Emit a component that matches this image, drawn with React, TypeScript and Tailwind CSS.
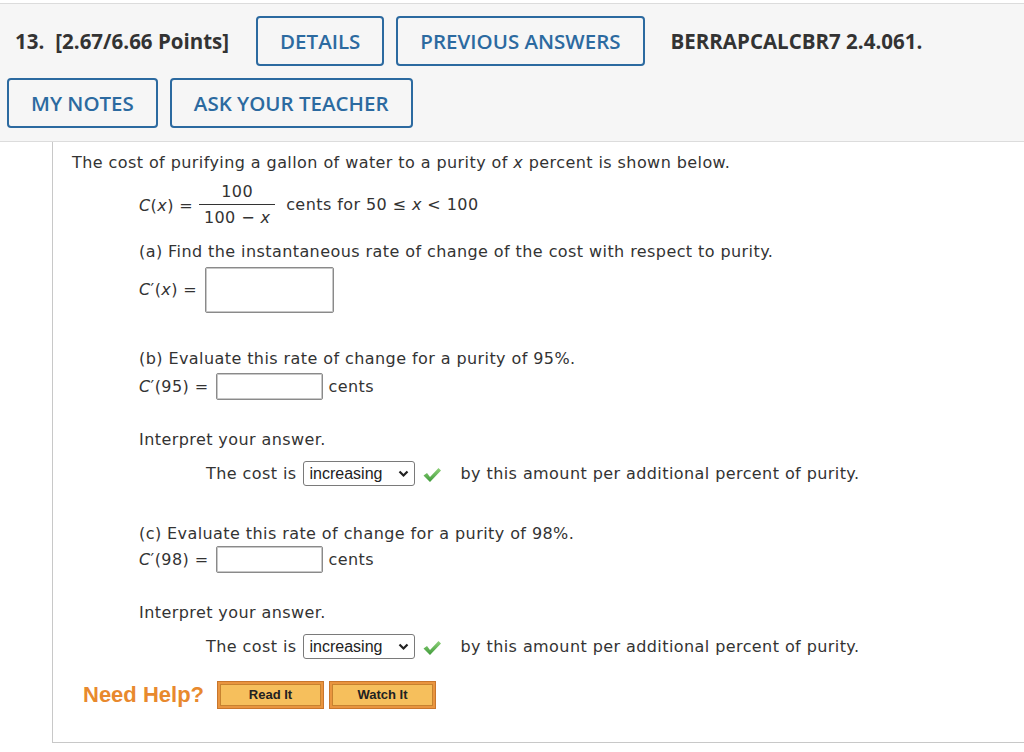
import React from 'react';

// Header button (blue outline)
function OutlineButton({ label }: { label: string }) {
  return (
    <div className="h-[50px] flex items-center px-[22px] border-2 border-[#2c6aa0] rounded-[4px] text-[#2c6aa0] text-[20.5px] font-semibold bg-[#f6f6f6]">
      {label}
    </div>
  );
}

function AnswerBox({ w, h }: { w: string; h: string }) {
  return <div className={`${w} ${h} border border-[#8a8a8a] rounded-[2px] bg-white shadow-[inset_0_0_0_1px_#c8c8c8]`} />;
}

function CheckMark() {
  return (
    <svg width="20" height="18" viewBox="0 0 20 18">
      <defs>
        <linearGradient id="chk" x1="0" y1="0" x2="0" y2="1">
          <stop offset="0" stopColor="#8fd27a" />
          <stop offset="1" stopColor="#3f9a3a" />
        </linearGradient>
      </defs>
      <path d="M1.5 9.5 L5 7 L8 11 L16.5 2 L19 4.5 L8 16 Z" fill="url(#chk)" />
    </svg>
  );
}

function SelectBox() {
  return (
    <div className="w-[112px] h-[25px] flex items-center justify-between pl-[6px] pr-[5px] border border-[#7a7a7a] rounded-[3px] bg-white text-[16px] tracking-normal text-[#222] [font-family:'Liberation_Sans',Arial,sans-serif]">
      <span>increasing</span>
      <svg width="11" height="8" viewBox="0 0 11 8">
        <path d="M1.5 1.5 L5.5 5.5 L9.5 1.5" fill="none" stroke="#222" strokeWidth="2.2" />
      </svg>
    </div>
  );
}

function Interpret() {
  return (
    <>
      <div className="mt-[29px] ml-[67px] h-[22px] flex items-center">Interpret your answer.</div>
      <div className="mt-[10px] ml-[134px] flex items-center h-[25px]">
        <span>The cost is</span>
        <span className="ml-[6px]"><SelectBox /></span>
        <span className="ml-[7px] mt-[3px]"><CheckMark /></span>
        <span className="ml-[19px]">by this amount per additional percent of purity.</span>
      </div>
    </>
  );
}

function Cvalue({ n, top }: { n: string; top: string }) {
  return (
    <div className={`${top} ml-[67px] flex items-center h-[27px]`}>
      <span><i>C</i>′({n}) =</span>
      <span className="ml-[7px]"><AnswerBox w="w-[107px]" h="h-[27px]" /></span>
      <span className="ml-[6px]">cents</span>
    </div>
  );
}

function HelpButton({ label }: { label: string }) {
  return (
    <div className="h-[28px] w-[107px] border border-[#c9762c] bg-[#e9953f] p-[2px]">
      <div className="h-full w-full border border-[#c7822f] bg-[#f6bf5c] flex items-center justify-center text-[13px] font-bold tracking-normal text-[#222] [font-family:'Liberation_Sans',Arial,sans-serif]">
        {label}
      </div>
    </div>
  );
}

export default function App() {
  return (
    <div className="w-[1024px] h-[752px] bg-white [font-family:'Open_Sans',sans-serif] overflow-hidden">
      {/* Header */}
      <div className="mt-[3px] bg-[#f6f6f6] border-t border-b border-[#dcdcdc] h-[139px]">
        <div className="flex items-center pt-[12px] pl-[15px]">
          <span className="text-[20.5px] font-bold text-[#333]">13.</span>
          <span className="ml-[11px] text-[20.5px] font-bold text-[#333]">[2.67/6.66 Points]</span>
          <div className="ml-[27px]"><OutlineButton label="DETAILS" /></div>
          <div className="ml-[12px]"><OutlineButton label="PREVIOUS ANSWERS" /></div>
          <span className="ml-[26px] text-[20.5px] font-bold text-[#333]">BERRAPCALCBR7 2.4.061.</span>
        </div>
        <div className="flex items-center mt-[12px] pl-[7px] gap-[12px]">
          <OutlineButton label="MY NOTES" />
          <OutlineButton label="ASK YOUR TEACHER" />
        </div>
      </div>

      {/* Question body */}
      <div className="ml-[52px] h-[601px] border-l border-b border-[#c8c8c8] pl-[19px] pt-[10px] text-[16px] tracking-[0.42px] text-[#333] [font-family:'DejaVu_Sans',Verdana,sans-serif]">
        <div className="h-[22px] flex items-center">
          The cost of purifying a gallon of water to a purity of&nbsp;<i>x</i>&nbsp;percent is shown below.
        </div>

        <div className="mt-[6px] ml-[67px] flex items-center h-[51px]">
          <span><i>C</i>(<i>x</i>) =</span>
          <span className="ml-[6px] inline-flex flex-col items-center">
            <span className="leading-[24px]">100</span>
            <span className="h-px w-[76px] bg-[#333]" />
            <span className="leading-[26px]">100 − <i>x</i></span>
          </span>
          <span className="ml-[11px] mt-[-2px]">cents for 50 ≤ <i>x</i> &lt; 100</span>
        </div>

        <div className="mt-[10px] ml-[67px] h-[22px] flex items-center">
          (a) Find the instantaneous rate of change of the cost with respect to purity.
        </div>

        <div className="mt-[4px] ml-[67px] flex items-center">
          <span><i>C</i>′(<i>x</i>) =</span>
          <span className="ml-[8px]"><AnswerBox w="w-[129px]" h="h-[46px]" /></span>
        </div>

        <div className="mt-[35px] ml-[67px] h-[22px] flex items-center">
          (b) Evaluate this rate of change for a purity of 95%.
        </div>
        <Cvalue n="95" top="mt-[3px]" />

        <Interpret />

        <div className="mt-[37px] ml-[67px] h-[22px] flex items-center">
          (c) Evaluate this rate of change for a purity of 98%.
        </div>
        <Cvalue n="98" top="mt-[1px]" />

        <Interpret />

        <div className="mt-[19px] ml-[11px] flex items-center">
          <span className="text-[22px] font-bold tracking-normal text-[#e8892e] [font-family:'Liberation_Sans',Arial,sans-serif]">Need Help?</span>
          <span className="ml-[13px]"><HelpButton label="Read It" /></span>
          <span className="ml-[5px]"><HelpButton label="Watch It" /></span>
        </div>
      </div>
    </div>
  );
}
